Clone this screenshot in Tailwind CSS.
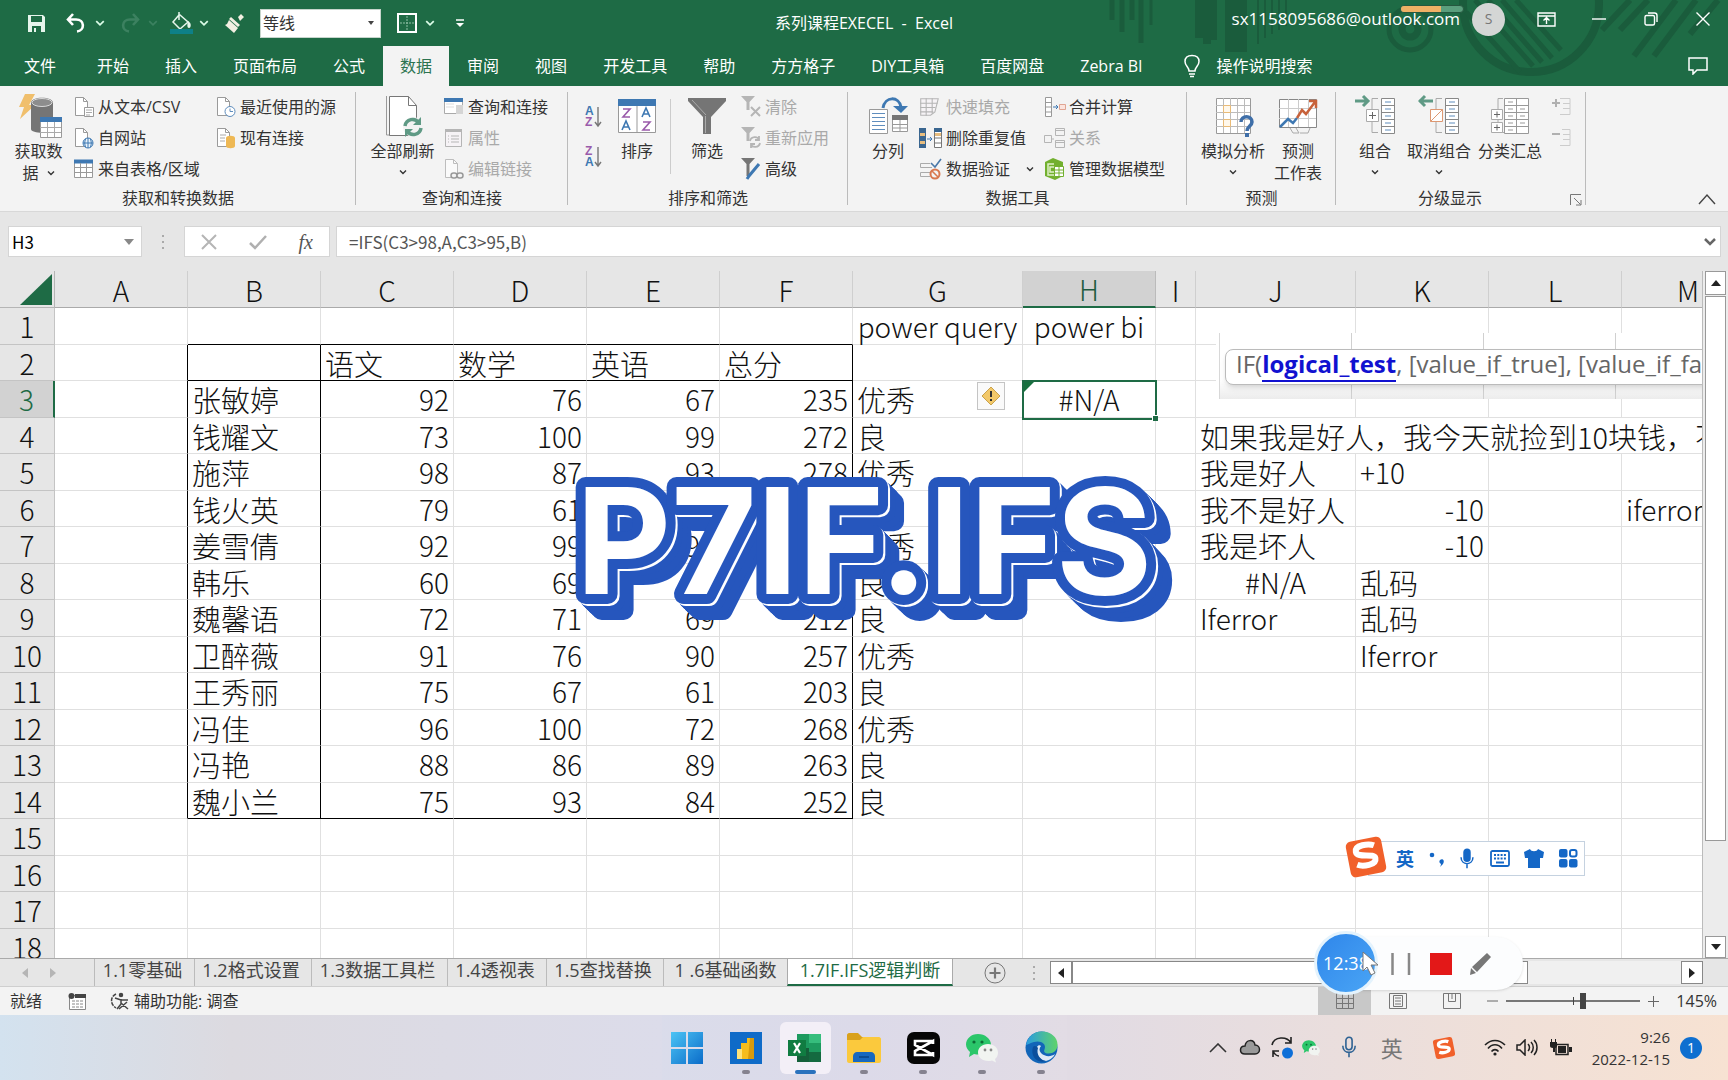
<!DOCTYPE html>
<html lang="zh-CN">
<head>
<meta charset="utf-8">
<title>系列课程EXECEL - Excel</title>
<script src="https://cdn.jsdelivr.net/npm/@tailwindcss/browser@4"></script>
</head>
<body class="relative flex h-screen flex-col overflow-hidden bg-[#e6e6e6] font-['Open_Sans','Noto_Sans_CJK_SC',sans-serif] text-base text-[#333]">

<svg class="hidden">
  <defs>
    <symbol id="chev" viewBox="0 0 8 8"><path d="M1 2.500 4 5.500 7 2.500" fill="none" stroke="currentColor" stroke-width="1.400"/></symbol>
    <symbol id="page" viewBox="0 0 22 22"><path d="M2.500 1.500h8l4 4v14h-12z" fill="#fff" stroke="#9a9a9a"/><path d="M10.500 1.500v4h4" fill="none" stroke="#9a9a9a"/></symbol>
    <symbol id="sogou" viewBox="0 0 44 44"><g transform="rotate(-11 22 22)"><rect x="4" y="4" width="36" height="36" rx="5" fill="#f1602a"/><path d="M32 12c-5-3-19-4-19 3 0 7 18 4 18 10 0 7-14 6-19 3" fill="none" stroke="#fff" stroke-width="6"/></g></symbol>
    <symbol id="wechat" viewBox="0 0 36 32"><path d="M14 2C7 2 2 7 2 12.500c0 3 2 6 4 7.500L5 25l5-3c10 2 17-2 17-9.500C27 7 21 2 14 2z" fill="#2bc66a"/><circle cx="10" cy="10" r="1.600" fill="#0c6b35"/><circle cx="18" cy="10" r="1.600" fill="#0c6b35"/><path d="M24 12c-6 0-10 4-10 8.500S18 29 24 29c1 0 3 0 4-.6l4 2-1-3.500c2-1.500 3-3.500 3-6.400C34 16 30 12 24 12z" fill="#f1f4f1"/><circle cx="21" cy="18" r="1.400" fill="#888"/><circle cx="27" cy="18" r="1.400" fill="#888"/></symbol>
    <symbol id="mic" viewBox="0 0 18 26"><rect x="5.500" y="1.500" width="7" height="14" rx="3.500"/><path d="M2 11c0 10 14 10 14 0M9 19v5" fill="none"/></symbol>
  </defs>
</svg>

<header class="relative shrink-0 bg-[#1e6b45] text-white">
  <svg class="absolute top-0 right-0 h-[86px] w-[628px]" viewBox="0 0 628 86" fill="none" stroke="#1a5c3c">
    <path d="M12 0v20M22 0v32M32 0v20M41 0v43" stroke-width="5"/>
    <path d="M51 0v25" stroke-width="3"/><path d="M99 0v38M107 0v44M113 0v40" stroke-width="8"/><path d="M136 0v52" stroke-width="22"/>
    <path d="M158 0v44M165 0v38M172 0v34M179 0v30M186 0v26" stroke-width="2"/>
    <circle cx="310" cy="29" r="21" stroke-width="5"/><circle cx="310" cy="29" r="8" stroke-width="7"/>
    <circle cx="431" cy="4" r="68" stroke-width="8"/>
    <path d="M375 0l58 66M388 0l54 62M402 0l50 58M416 0l45 50M366 12l54 60" stroke-width="5"/>
    <path d="M530 0l-28 30M548 0l-28 30M576 0l-42 56M596 0l-42 56M618 0l-28 34" stroke-width="6"/>
  </svg>
  <div class="relative grid h-[46px] grid-cols-[1fr_auto_1fr] items-center">
    <div class="flex items-center pl-[27px]">
      <button aria-label="保存" class="mr-5"><svg class="size-[19px]" viewBox="0 0 19 19"><path d="M1 1h15l2 2v15H1z" fill="#e6f5ec"/><path d="M4 2h11v6H4zM5 12h9v6H5z" fill="#1e6b45"/><path d="M7 14h2v4H7z" fill="#e6f5ec"/></svg></button>
      <button aria-label="撤消" class="mr-2.5"><svg class="h-5 w-[19px]" viewBox="0 0 19 20" fill="none" stroke="#fff" stroke-width="2.600"><path d="M7 1 2 6.500 7 12M2 6.500h8c9 0 9 11 1 12"/></svg></button>
      <svg class="mr-4 size-2.5 text-green-100"><use href="#chev"/></svg>
      <button aria-label="恢复" class="mr-2"><svg class="h-5 w-[19px]" viewBox="0 0 19 20" fill="none" stroke="#3c8160" stroke-width="2.600"><path d="M12 1l5 5.500L12 12M17 6.500H9c-9 0-9 11-1 12"/></svg></button>
      <svg class="mr-3 size-2.5 text-[#3c8160]"><use href="#chev"/></svg>
      <button aria-label="填充颜色" class="mr-1.5"><svg class="h-6 w-[23px]" viewBox="0 0 23 24"><path d="M9 4 3 11l7 7 8-7-8-7zM9 9V1" fill="none" stroke="#e6f5ec" stroke-width="1.500"/><path d="M18 10c4 2 3 7 1 7s-2-3-1-7z" fill="#e6f5ec"/><path d="M0 18h23v5H0z" fill="#0e8087"/></svg></button>
      <svg class="mr-4 size-2.5 text-green-100"><use href="#chev"/></svg>
      <button aria-label="格式刷" class="mr-4"><svg class="h-5 w-[19px]" viewBox="0 0 19 20" fill="#f3efe2"><path d="M13 4l3-3 3 3-4 4zM6 4l9 8-2 2-9-8zM4 7l9 8-4 5-9-8 2-1z"/></svg></button>
      <select aria-label="字体" class="h-[29px] w-[121px] appearance-none border border-[#c6d5cc] bg-white px-0.5 text-base leading-none text-[#333]"><option>等线</option></select>
      <svg class="-ml-4 mr-5 h-2 w-3" viewBox="0 0 12 8"><path d="M3 2h6L6 6z" fill="#444"/></svg>
      <button aria-label="边框" class="mr-2"><svg class="h-5 w-5" viewBox="0 0 20 20"><path d="M1 1h18v18H1z" fill="none" stroke="#fff" stroke-width="2"/><path d="M10 3v14M3 10h14" stroke="#8fc0a6" stroke-dasharray="2 1"/></svg></button>
      <svg class="mr-5 size-2.5 text-green-100"><use href="#chev"/></svg>
      <svg class="h-3 w-2.5" viewBox="0 0 10 12"><path d="M1 3h8" stroke="#fff" stroke-width="1.500"/><path d="M1 6h8L5 10z" fill="#fff"/></svg>
    </div>
    <h1 class="whitespace-pre">系列课程EXECEL  -  Excel</h1>
    <div class="relative flex items-center justify-end pr-[18px] pb-2">
      <span class="mr-3 text-[17px]">sx1158095686@outlook.com</span>
      <span class="mr-8 flex size-[33px] items-center justify-center rounded-full bg-[#d4d6d5] text-sm text-[#777]">S</span>
      <button aria-label="功能区显示选项" class="mr-9"><svg class="h-[15px] w-[19px]" viewBox="0 0 19 15" fill="none" stroke="#fff" stroke-width="1.400"><path d="M1 1h17v13H1zM1 4h17M9.500 12V6M6.500 8.500l3-3 3 3"/></svg></button>
      <button aria-label="最小化" class="mr-[38px]"><svg class="size-3.5" viewBox="0 0 14 14"><path d="M0 7h14" stroke="#fff" stroke-width="1.400"/></svg></button>
      <button aria-label="还原" class="mr-[38px]"><svg class="size-3.5" viewBox="0 0 14 14" fill="none" stroke="#fff" stroke-width="1.400"><rect x="1" y="3.500" width="9.500" height="9.500" rx="1.500"/><path d="M4 1h6.500c2 0 2.500 1 2.500 2.500V10"/></svg></button>
      <button aria-label="关闭"><svg class="size-3.5" viewBox="0 0 14 14"><path d="M.5.5l13 13M13.500.5l-13 13" stroke="#fff" stroke-width="1.400"/></svg></button>
      <span class="absolute top-0.5 right-[264px] h-2 w-16 overflow-hidden rounded-full border border-[#25583f] bg-[#5a9f7d]"><span class="block h-2 w-10 bg-[#efb165]"></span></span>
    </div>
  </div>
  <nav class="relative flex h-10 items-center whitespace-nowrap">
    <a href="#" class="pr-[23px] pl-6">文件</a>
    <a href="#" class="px-[18px]">开始</a>
    <a href="#" class="px-[18px]">插入</a>
    <a href="#" class="px-[18px]">页面布局</a>
    <a href="#" class="px-[18px]">公式</a>
    <a href="#" aria-current="page" class="flex h-full items-center bg-[#f3f3f3] px-[17px] text-[#2c7350]">数据</a>
    <a href="#" class="px-[18px]">审阅</a>
    <a href="#" class="px-[18px]">视图</a>
    <a href="#" class="px-[18px]">开发工具</a>
    <a href="#" class="px-[18px]">帮助</a>
    <a href="#" class="px-[18px]">方方格子</a>
    <a href="#" class="px-[18px]">DIY工具箱</a>
    <a href="#" class="px-[18px]">百度网盘</a>
    <a href="#" class="px-[18px]">Zebra BI</a>
    <a href="#" class="flex items-center gap-4 pl-[22px]"><svg class="h-6 w-[18px]" viewBox="0 0 18 24" fill="none" stroke="#fff" stroke-width="1.500"><path d="M6 17c0-4-4-5-4-9.500C2 3.500 5 1.500 9 1.500s7 2 7 6c0 4.500-4 5.500-4 9.500zM6 20h6M7 22.500h4"/></svg>操作说明搜索</a>
    <button aria-label="批注" class="mr-5 ml-auto"><svg class="h-[18px] w-5" viewBox="0 0 20 18" fill="none" stroke="#fff" stroke-width="1.500"><path d="M1 1h18v12H9l-4 4v-4H1z"/></svg></button>
  </nav>
</header>

<section aria-label="功能区" class="flex h-[126px] shrink-0 border-b border-[#d8d8d8] bg-[#f3f3f3] pt-[5px] leading-[22px] whitespace-nowrap">
  <!-- 获取和转换数据 -->
  <div class="relative w-[356px] shrink-0">
    <div class="flex h-[93px]">
      <button class="flex w-[73px] flex-col items-center pl-1"><svg class="h-[49px] w-[46px]" viewBox="0 0 46 49"><path d="M9 3h10l-6 11h6L4 28l4-12H3z" fill="#f0bf6c"/><path d="M15 12c0-7 22-7 22 0v26c0 5-22 5-22 0z" fill="#757575"/><ellipse cx="26" cy="11.500" rx="10" ry="4" fill="#8d8d8d" stroke="#d8d8d8"/><path d="M24.500 26.500h21v20h-21z" fill="#fff" stroke="#999"/><path d="M24 26h22v5H24z" fill="#3e78b2"/><path d="M24 36.500h21M24 41.500h21M31.500 31v15M38.500 31v15" stroke="#aaa"/></svg><span>获取数</span><span class="flex items-center gap-2">据<svg class="size-2"><use href="#chev"/></svg></span></button>
      <div class="w-[142px] shrink-0">
        <button class="flex h-[31px] items-center gap-[3px]"><svg class="size-[22px]" viewBox="0 0 22 22"><use href="#page"/><path d="M11.500 11.500h9v9h-9z" fill="#fff" stroke="#999"/><path d="M13 14h6M13 16.500h6M13 19h4" stroke="#aaa"/></svg>从文本/CSV</button>
        <button class="flex h-[31px] items-center gap-[3px]"><svg class="size-[22px]" viewBox="0 0 22 22"><use href="#page"/><g fill="#e9f3fb" stroke="#3e78b2"><circle cx="15" cy="16" r="5"/><path d="M10 16h10M15 11v10M12.500 12c-1 3-1 5 0 8M17.500 12c1 3 1 5 0 8" fill="none"/></g></svg>自网站</button>
        <button class="flex h-[31px] items-center gap-[3px]"><svg class="size-[22px]" viewBox="0 0 22 22"><path d="M1.500 2.500h18v17h-18z" fill="#fff" stroke="#999"/><path d="M1 1.500h19v4H1z" fill="#3e78b2"/><path d="M1 9.500h19M1 14.500h19M7.500 5v14M13.500 5v14" stroke="#999"/></svg>来自表格/区域</button>
      </div>
      <div>
        <button class="flex h-[31px] items-center gap-[3px]"><svg class="size-[22px]" viewBox="0 0 22 22"><use href="#page"/><circle cx="15" cy="15.500" r="5" fill="#fff" stroke="#5f8dbd"/><path d="M15 12.500v3h3" fill="none" stroke="#5f8dbd"/></svg>最近使用的源</button>
        <button class="flex h-[31px] items-center gap-[3px]"><svg class="size-[22px]" viewBox="0 0 22 22"><use href="#page"/><path d="M5 8h6M5 11h5M5 14h5" stroke="#aaa"/><path d="M11 11c0-3 9-3 9 0v8c0 3-9 3-9 0z" fill="#eeb854"/></svg>现有连接</button>
      </div>
    </div>
    <p class="text-center leading-7">获取和转换数据</p>
    <span class="absolute top-px right-0 h-[113px] w-px bg-[#bbb]"></span>
  </div>
  <!-- 查询和连接 -->
  <div class="relative w-[212px] shrink-0">
    <div class="flex h-[93px] pl-3.5">
      <button class="mr-2 flex w-[65px] flex-col items-center"><svg class="h-[49px] w-[40px]" viewBox="0 0 40 49"><path d="M3.500 5v39h20" fill="none" stroke="#999"/><path d="M6.500 5.500h19l8 9v30h-27z" fill="#fff" stroke="#777"/><path d="M25.500 5.500v9h8" fill="none" stroke="#777"/><circle cx="30" cy="36" r="10" fill="#f3f3f3"/><g fill="none" stroke="#5f9a85" stroke-width="3.500"><path d="M22 35c1-7 10-9 14-3M38 37c-1 7-10 9-14 3"/></g><path d="M38 26v8h-8zM22 46v-8h8z" fill="#5f9a85"/></svg><span>全部刷新</span><svg class="mt-1.5 size-2"><use href="#chev"/></svg></button>
      <div>
        <button class="flex h-[31px] items-center gap-[3px]"><svg class="size-[22px]" viewBox="0 0 22 22"><path d="M1.500 2.500h18v15h-18z" fill="#fff" stroke="#aaa"/><path d="M1 2h19v4H1z" fill="#3e78b2"/><path d="M13 9h7v9h-7z" fill="#d5d5d5"/><path d="M3 8h8M3 11h8" stroke="#ddd"/></svg>查询和连接</button>
        <button disabled class="flex h-[31px] items-center gap-[3px] text-[#a9a9a9]"><svg class="size-[22px]" viewBox="0 0 22 22"><path d="M2.500 2.500h16v17h-16z" fill="#f6f3f6" stroke="#b5b5b5"/><path d="M2 2h17v3H2z" fill="#b5b5b5"/><path d="M5 9h1M8 9h8M5 12h1M8 12h8M5 15h1M8 15h8" stroke="#b5b5b5"/></svg>属性</button>
        <button disabled class="flex h-[31px] items-center gap-[3px] text-[#a9a9a9]"><svg class="size-[22px]" viewBox="0 0 22 22"><g class="opacity-60"><use href="#page"/></g><g fill="#f3f3f3" stroke="#999" stroke-width="1.500"><rect x="8" y="15" width="6" height="5" rx="2.500"/><rect x="14" y="15" width="6" height="5" rx="2.500"/></g></svg>编辑链接</button>
      </div>
    </div>
    <p class="text-center leading-7">查询和连接</p>
    <span class="absolute top-px right-0 h-[113px] w-px bg-[#bbb]"></span>
  </div>
  <!-- 排序和筛选 -->
  <div class="relative w-[280px] shrink-0">
    <div class="flex h-[93px] pl-[17px]">
      <div class="mr-2.5 flex w-5 flex-col gap-4 pt-3.5 font-['Liberation_Sans'] text-xs leading-[11px]">
        <button aria-label="升序" class="flex items-center text-left font-bold text-[#3e78b2]"><span class="block">A<br><span class="text-[#9a5bab]">Z</span></span><svg class="h-6 w-2" viewBox="0 0 8 24"><path d="M4 2v19M1 17l3 4 3-4" fill="none" stroke="#777" stroke-width="1.400"/></svg></button>
        <button aria-label="降序" class="flex items-center text-left font-bold text-[#9a5bab]"><span class="block">Z<br><span class="text-[#3e78b2]">A</span></span><svg class="h-6 w-2" viewBox="0 0 8 24"><path d="M4 2v19M1 17l3 4 3-4" fill="none" stroke="#777" stroke-width="1.400"/></svg></button>
      </div>
      <button class="flex w-11 flex-col items-center"><svg class="h-[49px] w-[38px]" viewBox="0 0 38 49"><path d="M.5 8.500h37v33H.5z" fill="#fff" stroke="#999"/><path d="M0 8h38v7H0z" fill="#3e78b2"/><path d="M19 15v26" stroke="#999"/><g fill="none" stroke-width="1.600"><path d="M5 18h7l-7 8h7M25 31h7l-7 8h7" stroke="#9a5bab"/><path d="M4 39l4-9 4 9M5.500 36h5M24 26l4-9 4 9M25.500 23h5" stroke="#3e78b2"/></g></svg><span>排序</span></button>
      <span class="mx-[11px] mt-2 h-[75px] w-px bg-[#ccc]"></span>
      <button class="mr-2 flex w-[50px] flex-col items-center"><svg class="h-[49px] w-[38px]" viewBox="0 0 38 49"><path d="M0 7h38v3L23 26v17h-8V26L0 10z" fill="#757575"/><path d="M17.500 25v17M4 9l14 15" stroke="#aaa"/></svg><span>筛选</span></button>
      <div>
        <button disabled class="flex h-[31px] items-center gap-[3px] text-[#a9a9a9]"><svg class="size-[22px]" viewBox="0 0 22 22"><path d="M1 0h14L9.500 6v8h-3V6z" fill="#b5b5b5"/><path d="M11 11l9 9M20 11l-9 9" stroke="#b5b5b5" stroke-width="2"/></svg>清除</button>
        <button disabled class="flex h-[31px] items-center gap-[3px] text-[#a9a9a9]"><svg class="size-[22px]" viewBox="0 0 22 22"><path d="M1 0h14L9.500 6v8h-3V6z" fill="#b5b5b5"/><path d="M10 14c1-5 8-5 9-1M20 16c-1 5-8 5-9 1M19 9v4h-4M11 21v-4h4" fill="none" stroke="#b5b5b5" stroke-width="1.800"/></svg>重新应用</button>
        <button class="flex h-[31px] items-center gap-[3px]"><svg class="size-[22px]" viewBox="0 0 22 22"><path d="M1 0h14L9.500 6v12h-3V6z" fill="#757575"/><path d="M19 6 9 18l-2 3" stroke="#3e78b2" stroke-width="3"/></svg>高级</button>
      </div>
    </div>
    <p class="text-center leading-7">排序和筛选</p>
    <span class="absolute top-px right-0 h-[113px] w-px bg-[#bbb]"></span>
  </div>
  <!-- 数据工具 -->
  <div class="relative w-[339px] shrink-0">
    <div class="flex h-[93px] pl-[18px]">
      <button class="mr-2 flex w-11 flex-col items-center"><svg class="h-[49px] w-[40px]" viewBox="0 0 40 49"><path d="M1.500 18.500h18v24h-18z" fill="#fff" stroke="#999"/><path d="M4 22.500h13M4 26.500h13M4 30.500h13M4 34.500h13M4 38.500h13" stroke="#5f8dbd"/><path d="M15 17c2-12 16-12 18-1" fill="none" stroke="#3e78b2" stroke-width="3"/><path d="M25 15h15l-7 7z" fill="#3e78b2"/><path d="M24.500 25.500h15v15h-15z" fill="#fff" stroke="#999"/><path d="M24 24h16v5H24z" fill="#757575"/><path d="M24 33.500h15M24 37h15M32 29v11" stroke="#999"/></svg><span>分列</span></button>
      <div class="w-[126px] shrink-0">
        <button disabled class="flex h-[31px] items-center gap-1 text-[#a9a9a9]"><svg class="size-6" viewBox="0 0 22 22"><path d="M2.500 3.500h16l-3 12-4 3h-9z" fill="#f6f3f6" stroke="#b5b5b5"/><path d="M2 7.500h16M2 11.500h14M2 15.500h12M7.500 3v16M13 3v14" stroke="#b5b5b5"/></svg>快速填充</button>
        <button class="flex h-[31px] items-center gap-1"><svg class="size-6" viewBox="0 0 24 24"><path d="M1 2h7v20H1z" fill="#3a6690"/><path d="M2 7h5v3H2zM2 15h5v3H2z" fill="#e8bd7e"/><path d="M16.500 2.500h7v19h-7z" fill="#fff" stroke="#777"/><path d="M16 2h8v4h-8z" fill="#3a6690"/><path d="M17 7h6v3h-6z" fill="#e8bd7e"/><path d="M16 12h8M16 17h8" stroke="#777"/><path d="M9 13h5M12 11l2 2-2 2" fill="none" stroke="#3e78b2"/></svg>删除重复值</button>
        <button class="flex h-[31px] items-center gap-1"><svg class="size-6" viewBox="0 0 24 24"><path d="M12 6.500H2.500v4H14M12 15.500H2.500v4H12" fill="none" stroke="#aaa"/><path d="M13 6l4 4 6-8" fill="none" stroke="#4a78a8" stroke-width="1.600"/><circle cx="17" cy="17" r="4.500" fill="none" stroke="#d9784f" stroke-width="2"/><path d="M14 14l6 6" stroke="#d9784f" stroke-width="1.600"/></svg>数据验证<svg class="ml-3 size-2"><use href="#chev"/></svg></button>
      </div>
      <div class="-ml-0.5">
        <button class="flex h-[31px] items-center gap-[3px]"><svg class="size-6" viewBox="0 0 24 24"><path d="M3.500 2.500h6v19h-6zM3 7.500h6M3 12h6M3 17h6" fill="#fff" stroke="#999"/><path d="M11 12h5M14 10l2 2-2 2" fill="none" stroke="#3e78b2"/><path d="M17.500 9.500h6v5h-6z" fill="#fbe4de" stroke="#e0a593"/></svg>合并计算</button>
        <button disabled class="flex h-[31px] items-center gap-[3px] text-[#a9a9a9]"><svg class="size-6" viewBox="0 0 24 24" fill="none" stroke="#b5b5b5"><path d="M2.500 9.500h7v7h-7zM13.500 2.500h9v7h-9zM13.500 14.500h9v7h-9zM10 13h2M13 4.500h9M13 16.500h9"/></svg>关系</button>
        <button class="flex h-[31px] items-center gap-[3px]"><svg class="size-6" viewBox="0 0 24 24"><path d="M3 5l8-4 10 4v14l-8 4-10-4z" fill="#72b02e"/><path d="M12 7H6v11h6M12 10H8v5h4" fill="none" stroke="#dff0c8" stroke-width="1.500"/><path d="M12.500 9.500h9v10h-9zM12 13h9M12 16h9M17 9v10" fill="#fff" stroke="#72b02e"/></svg>管理数据模型</button>
      </div>
    </div>
    <p class="text-center leading-7">数据工具</p>
    <span class="absolute top-px right-0 h-[113px] w-px bg-[#bbb]"></span>
  </div>
  <!-- 预测 -->
  <div class="relative w-[149px] shrink-0">
    <div class="flex h-[93px] pl-3">
      <button class="flex w-[68px] flex-col items-center"><svg class="h-[49px] w-[42px]" viewBox="0 0 42 49"><path d="M4.500 7.500h34v35h-34z" fill="#fff" stroke="#999"/><path d="M4 14.500h34M4 21.500h34M4 28.500h34M4 35.500h34M11.500 7v35M18.500 7v35M25.500 7v35M32.500 7v35" stroke="#bbb"/><path d="M11.500 14.500h7v7h-7zM11.500 28.500h7v7h-7z" fill="#fff8ec" stroke="#e9bb77"/><path d="M29 31c0-7 11-7 11 0 0 4-5 4-5 9" fill="none" stroke="#3e6ea8" stroke-width="3.500"/><path d="M33 42h4v4h-4z" fill="#3e6ea8"/></svg><span>模拟分析</span><svg class="mt-1.5 size-2"><use href="#chev"/></svg></button>
      <button class="flex w-[62px] flex-col items-center"><svg class="h-[49px] w-[40px]" viewBox="0 0 40 49"><path d="M1.500 8.500h37v28h-37z" fill="#fff" stroke="#888"/><path d="M1 17.500h37M1 27.500h37M10.500 8v28M20.500 8v28M30.500 8v28" stroke="#ccc"/><path d="M2 36l8-8 5 4 4-5" fill="none" stroke="#3e78b2" stroke-width="2.500"/><path d="M19 27l5-8 4 4 9-12M31 10h7v7" fill="none" stroke="#c8623b" stroke-width="2.500"/><path d="M12 37l3 5h6l-3-5M22 42h8l2-5" fill="none" stroke="#aaa"/></svg><span>预测</span><span>工作表</span></button>
    </div>
    <p class="text-center leading-7">预测</p>
    <span class="absolute top-px right-0 h-[113px] w-px bg-[#bbb]"></span>
  </div>
  <!-- 分级显示 -->
  <div class="relative w-[250px] shrink-0">
    <div class="flex h-[93px] pl-[10px]">
      <button class="flex w-[58px] flex-col items-center"><svg class="h-[49px] w-[42px]" viewBox="0 0 42 49"><path d="M1 10h13M9 5l5 5-5 5" fill="none" stroke="#5f9a85" stroke-width="3"/><path d="M24 7.500h-6v34h6" fill="none" stroke="#aaa"/><path d="M12.500 18.500h12v12h-12z" fill="#fff" stroke="#aaa"/><path d="M15 24.500h7M18.500 21v7" stroke="#666"/><path d="M27.500 7.500h13v35h-13zM27 14.500h13M27 21.500h13M27 28.500h13M27 35.500h13" fill="#fff" stroke="#888"/><path d="M31 11h6M31 18h6M31 25h6M31 32h6M31 39h6" stroke="#5f8dbd"/></svg><span>组合</span><svg class="mt-1.5 size-2"><use href="#chev"/></svg></button>
      <button class="flex w-[70px] flex-col items-center"><svg class="h-[49px] w-[42px]" viewBox="0 0 42 49"><path d="M1 10h14M7 5l-5 5 5 5" fill="none" stroke="#5f9a85" stroke-width="3"/><path d="M24 7.500h-6v34h6" fill="none" stroke="#aaa"/><path d="M12.500 18.500h12v12h-12zM12.500 30.500l12-12" fill="#fff" stroke="#dd9872"/><path d="M27.500 7.500h13v35h-13zM27 14.500h13M27 21.500h13M27 28.500h13M27 35.500h13" fill="#fff" stroke="#888"/><path d="M31 11h6M31 18h6M31 25h6M31 32h6M31 39h6" stroke="#5f8dbd"/></svg><span>取消组合</span><svg class="mt-1.5 size-2"><use href="#chev"/></svg></button>
      <button class="flex w-[72px] flex-col items-center"><svg class="h-[49px] w-[40px]" viewBox="0 0 40 49"><path d="M13 7.500H8v34h6" fill="none" stroke="#aaa"/><path d="M1.500 18.500h11v10h-11zM1.500 31.500h11v10h-11z" fill="#fff" stroke="#aaa"/><path d="M4 23.500h6M7 20.500v6M4 36.500h6M7 33.500v6" stroke="#666"/><path d="M14.500 7.500h24v35h-24zM14 14.500h24M14 21.500h24M14 28.500h24M14 35.500h24M26.500 7v35" fill="#fff" stroke="#999"/><path d="M18 11h5M18 18h5M30 18h5M18 25h5M30 25h5M18 32h5M30 32h5M18 39h5" stroke="#999"/></svg><span>分类汇总</span></button>
      <div class="pl-1.5">
        <button disabled aria-label="显示明细数据" class="flex h-[31px] items-center"><svg class="size-[20px]" viewBox="0 0 20 20" fill="none" stroke="#b0b0b0"><path d="M0 6h8M4 2v8" stroke-width="2"/><path d="M8 1.500h10v5H11M18 6.500v5h-7M18 11.500v6H8" stroke="#ccc"/></svg></button>
        <button disabled aria-label="隐藏明细数据" class="flex h-[31px] items-center"><svg class="size-[20px]" viewBox="0 0 20 20" fill="none" stroke="#b0b0b0"><path d="M0 6h8" stroke-width="2"/><path d="M10 1.500h8v5h-7M18 6.500v5h-7M18 11.500v6H8" stroke="#ccc"/></svg></button>
      </div>
    </div>
    <p class="pr-[22px] text-center leading-7">分级显示</p>
    <button aria-label="分级显示设置" class="absolute right-1 bottom-[5px]"><svg class="size-3" viewBox="0 0 12 12" fill="none" stroke="#777"><path d="M.5 11V.5H11M4 4l6.500 6.500M11 6v5H6"/></svg></button>
    <span class="absolute top-px right-0 h-[113px] w-px bg-[#bbb]"></span>
  </div>
  <button aria-label="折叠功能区" class="mr-3 mb-1.5 ml-auto self-end"><svg class="h-3 w-[18px]" viewBox="0 0 18 12"><path d="M1 11l8-9 8 9" fill="none" stroke="#444" stroke-width="1.400"/></svg></button>
</section>

<div class="flex h-[59px] shrink-0 items-center pr-[7px] pl-2">
  <div class="flex h-[31px] w-[134px] items-center border border-[#d5d5d5] bg-white pr-1.5">
    <input aria-label="名称框" value="H3" class="w-0 flex-1 px-[3px] font-['Noto_Sans_CJK_SC'] text-[17px] text-black outline-none">
    <svg class="h-2 w-3" viewBox="0 0 12 8"><path d="M1 1h10L6 7z" fill="#888"/></svg>
  </div>
  <svg class="mx-[19px] h-4 w-1" viewBox="0 0 4 16" fill="#aaa"><path d="M1 1h2v2H1zM1 7h2v2H1zM1 13h2v2H1z"/></svg>
  <div class="mr-1.5 flex h-[31px] w-[146px] items-center justify-between border border-[#d5d5d5] bg-white px-4">
    <button aria-label="取消"><svg class="size-4" viewBox="0 0 16 16"><path d="M1 1l14 14M15 1L1 15" stroke="#b5b5b5" stroke-width="2"/></svg></button>
    <button aria-label="输入"><svg class="h-4 w-[18px]" viewBox="0 0 18 16"><path d="M1 9l5 5L17 2" fill="none" stroke="#b0b0b0" stroke-width="2.500"/></svg></button>
    <button class="font-['Liberation_Serif'] text-xl leading-none text-[#555] italic">fx</button>
  </div>
  <div class="flex h-[31px] flex-1 items-center border border-[#d5d5d5] bg-white pr-1 pl-3">
    <input aria-label="编辑栏" value="=IFS(C3&gt;98,A,C3&gt;95,B)" class="w-0 flex-1 font-['Noto_Sans_CJK_SC'] text-[17px] text-[#555] outline-none">
    <svg class="h-2 w-3" viewBox="0 0 12 8"><path d="M1 1l5 5 5-5" fill="none" stroke="#666" stroke-width="2.500"/></svg>
  </div>
</div>

<main class="flex min-h-0 flex-1">
  <div class="relative min-w-0 flex-1 overflow-hidden bg-white">
    <table class="w-[1755px] table-fixed border-separate border-spacing-0 font-['Noto_Sans_CJK_SC',sans-serif] text-[28px] leading-[34px] font-light whitespace-nowrap text-[#111]">
      <colgroup id="cols"></colgroup>
      <thead><tr id="head"></tr></thead>
      <tbody id="rows"></tbody>
    </table>

    <!-- 活动单元格与错误提示 -->
    <div class="pointer-events-none absolute top-[109px] left-[1022px] h-[40px] w-[135px] border-2 border-[#1e6b45]">
      <svg class="size-2.5" viewBox="0 0 10 10"><path d="M0 0h10L0 10z" fill="#17703f"/></svg>
      <span class="absolute -right-[3px] -bottom-[3px] size-1.5 border-t border-l border-white bg-[#1e6b45]"></span>
    </div>
    <button aria-label="错误提示" class="absolute top-[111px] left-[977px] flex size-7 items-center justify-center border border-[#c4c4c4] bg-[#fafafa]"><svg class="size-5" viewBox="0 0 20 20"><path d="M10 1l9 9-9 9-9-9z" fill="#f2c869" stroke="#c9a24c"/><path d="M10 5v6M10 13v2" stroke="#333" stroke-width="2"/></svg></button>

    <!-- 函数语法提示 -->
    <div class="absolute top-[62px] left-[1216px] h-[66px] w-[520px] bg-white pl-[3px]">
      <div class="flex h-full bg-linear-to-b from-white from-70% to-[#ececec]">
        <span class="h-full w-[132px] border-l border-[#d8d8d8]"></span><span class="h-full w-[132px] border-l border-[#d0d0d0]"></span><span class="h-full w-[132px] border-l border-[#d0d0d0]"></span><span class="h-full w-[100px] border-l border-[#d0d0d0]"></span>
      </div>
      <div class="absolute top-[16px] left-[9px] flex h-9 w-[640px] items-start rounded-lg border border-[#bbb] bg-white pl-2.5 text-2xl leading-7 whitespace-pre text-[#666] shadow-md"><span>IF(<b class="border-b-2 border-[#1111d0] text-[#1111d0]">logical_test</b>, [value_if_true], [value_if_false])</span></div>
    </div>
  </div>

  <!-- 垂直滚动条 -->
  <div class="flex w-[26px] shrink-0 flex-col items-center border-l border-[#bbb] bg-[#ececec]">
    <button aria-label="向上滚动" class="flex h-6 w-[21px] items-center justify-center border border-[#999] bg-white"><svg class="h-1.5 w-2.5" viewBox="0 0 10 6"><path d="M0 6l5-6 5 6z" fill="#222"/></svg></button>
    <div class="mt-px h-[545px] w-[21px] border border-[#999] bg-white"></div>
    <button aria-label="向下滚动" class="mt-auto flex h-[22px] w-[21px] items-center justify-center border border-[#999] bg-white"><svg class="h-1.5 w-2.5" viewBox="0 0 10 6"><path d="M0 0h10L5 6z" fill="#222"/></svg></button>
  </div>
</main>

<div class="flex h-[29px] shrink-0 border-y border-t-[#aaa] border-b-[#cfcfcf] bg-[#e6e6e6] text-lg leading-[22px] whitespace-nowrap text-[#444]">
  <div class="flex w-[94px] items-center gap-[22px] pl-[22px]"><svg class="h-2.5 w-1.5" viewBox="0 0 6 10"><path d="M6 0v10L0 5z" fill="#b5b5b5"/></svg><svg class="h-2.5 w-1.5" viewBox="0 0 6 10"><path d="M0 0v10l6-5z" fill="#b5b5b5"/></svg></div>
  <a href="#" class="w-[100px] border-l border-[#bbb] pr-1 text-center">1.1零基础</a>
  <a href="#" class="w-[117px] border-l border-[#bbb] pr-1 text-center">1.2格式设置</a>
  <a href="#" class="w-[136px] border-l border-[#bbb] pr-1 text-center">1.3数据工具栏</a>
  <a href="#" class="w-[99px] border-l border-[#bbb] pr-1 text-center">1.4透视表</a>
  <a href="#" class="w-[117px] border-l border-[#bbb] pr-1 text-center">1.5查找替换</a>
  <a href="#" class="w-[124px] border-l border-[#bbb] text-center">1 .6基础函数</a>
  <a href="#" aria-current="page" class="w-[166px] border-x border-b-2 border-x-[#aaa] border-b-[#1e6b45] bg-white text-center text-[#1e6b45]">1.7IF.IFS逻辑判断</a>
  <button aria-label="新工作表" class="ml-[31px]"><svg class="size-[22px]" viewBox="0 0 22 22" fill="none" stroke="#777"><circle cx="11" cy="11" r="10"/><path d="M5.500 11h11M11 5.500v11" stroke-width="2.200"/></svg></button>
  <svg class="mt-1.5 mr-3.5 ml-[26px] h-4 w-1" viewBox="0 0 4 16" fill="#aaa"><path d="M1 1h2v2H1zM1 7h2v2H1zM1 13h2v2H1z"/></svg>
  <div class="mt-0.5 mr-[25px] flex h-[23px] flex-1 bg-[#f0f0f0]">
    <button aria-label="向左滚动" class="flex w-[22px] items-center justify-center border border-[#888] bg-white"><svg class="h-2.5 w-1.5" viewBox="0 0 6 10"><path d="M6 0v10L0 5z" fill="#222"/></svg></button>
    <div class="w-[456px] border border-[#888] bg-white"></div>
    <button aria-label="向右滚动" class="ml-auto flex w-[22px] items-center justify-center border border-[#888] bg-white"><svg class="h-2.5 w-1.5" viewBox="0 0 6 10"><path d="M0 0v10l6-5z" fill="#222"/></svg></button>
  </div>
</div>

<footer class="flex h-7 shrink-0 items-center bg-[#f3f3f3] pr-[11px] pl-2.5 whitespace-nowrap">
  <span class="mr-[26px]">就绪</span>
  <svg class="mr-6 h-[17px] w-[18px]" viewBox="0 0 18 17"><path d="M1.500 2.500h16v14h-16z" fill="#fff" stroke="#888"/><path d="M7 1h11v4H7z" fill="#444"/><circle cx="3.500" cy="3" r="3" fill="#444"/><path d="M4 8h3M8 8h3M12 8h3M4 11h3M8 11h3M12 11h3M4 14h3M8 14h3M12 14h3" stroke="#888"/></svg>
  <svg class="mr-1 h-[18px] w-5" viewBox="0 0 20 18" fill="none" stroke="#444" stroke-width="1.500"><path d="M6 2c-6 3-6 10 0 14" stroke-dasharray="4 1"/><circle cx="11" cy="3" r="1.500" fill="#444"/><path d="M5 6l6 2h7M11 7v5l-4 5M11 11l7 6M17 10l-8 7"/></svg>
  <button>辅助功能: 调查</button>
  <div class="ml-auto flex h-full items-center">
    <button aria-label="普通" class="flex h-full w-[53px] items-center justify-center bg-[#c8c8c8]"><svg class="h-4 w-[18px]" viewBox="0 0 18 16" fill="none" stroke="#777"><path d="M.5.500h17v15H.5zM0 5.500h18M0 10.500h18M6.500 0v16M12.500 0v16"/></svg></button>
    <button aria-label="页面布局" class="flex w-[54px] justify-center"><svg class="h-4 w-[18px]" viewBox="0 0 18 16" fill="none" stroke="#777"><path d="M.5.500h17v15H.5zM4.500 2.500h9v11h-9zM6 5h6M6 8h6M6 11h6"/></svg></button>
    <button aria-label="分页预览" class="flex w-[54px] justify-center"><svg class="h-4 w-[18px]" viewBox="0 0 18 16" fill="none" stroke="#777"><path d="M.5.500h17v15H.5zM5.500 0v8.500h7V0M9 1v5"/></svg></button>
    <button aria-label="缩小" class="ml-2 w-[11px]"><svg class="h-3 w-[11px]" viewBox="0 0 11 12"><path d="M0 6h11" stroke="#666"/></svg></button>
    <div class="relative mx-2 flex h-4 w-[134px] items-center">
      <span class="h-0.5 w-full bg-[#777]"></span><span class="absolute left-[67px] h-2 w-px bg-[#444]"></span>
      <input type="range" aria-label="显示比例" min="10" max="400" value="145" class="absolute inset-0 w-full opacity-0">
      <span class="pointer-events-none absolute left-[74px] h-4 w-1.5 bg-[#444]"></span>
    </div>
    <button aria-label="放大" class="mr-[17px] w-[11px]"><svg class="size-[11px]" viewBox="0 0 11 11"><path d="M0 5.500h11M5.500 0v11" stroke="#666"/></svg></button>
    <span>145%</span>
  </div>
</footer>

<div class="grid h-[65px] shrink-0 grid-cols-[1fr_auto_1fr] items-center bg-linear-to-r from-[#d3e2ef] via-[#dcdae9] via-50% to-[#f6e2d6]">
  <div class="h-full bg-linear-to-r from-[#d3e2ef] via-[#dcdae0] via-35% to-[#dcdcea]"></div>
  <nav aria-label="任务栏" class="flex h-full items-center gap-2 [&>button]:relative [&>button]:flex [&>button]:h-[52px] [&>button]:w-[51px] [&>button]:items-center [&>button]:justify-center [&>button]:rounded-md">
    <button aria-label="开始"><svg class="size-8" viewBox="0 0 32 32"><defs><linearGradient id="wg" x2="1" y2="1"><stop stop-color="#4cc4f5"/><stop offset="1" stop-color="#0b6cc9"/></linearGradient></defs><path d="M0 0h15v15H0zM17 0h15v15H17zM0 17h15v15H0zM17 17h15v15H17z" fill="url(#wg)"/></svg></button>
    <button aria-label="Power BI"><svg class="size-8" viewBox="0 0 32 32"><path d="M0 0h32v32H0z" fill="#0f6bc8"/><path d="M17 6h7v21H7V17h4v-6h6z" fill="#f5bd1d"/><path d="M7 17h5v10H7z" fill="#fde27a"/><path d="M20 6h4v21h-6z" fill="#d79a0c"/></svg><span class="absolute bottom-0 h-1 w-2 rounded-full bg-[#85828f]"></span></button>
    <button aria-label="Excel" class="bg-[#f3eff7]"><svg class="h-8 w-[34px]" viewBox="0 0 34 32"><path d="M9 2h24v28H9z" fill="#1d9a5f"/><path d="M21 2h12v9H21z" fill="#36bd7d"/><path d="M9 16h12v14H9z" fill="#14603a"/><path d="M21 20h12v10H21z" fill="#146a40"/><path d="M0 8h18v16H0z" fill="#107c41"/><path d="M6 11l6 10M12 11L6 21" stroke="#fff" stroke-width="2.200"/></svg><span class="absolute bottom-0 h-1 w-[21px] rounded-full bg-[#2a72bd]"></span></button>
    <button aria-label="文件资源管理器"><svg class="h-[30px] w-[34px]" viewBox="0 0 34 30"><path d="M0 2c0-1 1-2 2-2h9l4 4h17v8H0z" fill="#d9a11c"/><path d="M0 7h13l3-3h16c1 0 2 1 2 2v22c0 1-1 2-2 2H2c-1 0-2-1-2-2z" fill="#fbc93d"/><path d="M6 29v-6c0-2 2-4 4-4h14c2 0 4 2 4 4v6z" fill="#1868bf"/><path d="M12 24h10" stroke="#0d4c93" stroke-width="2"/></svg><span class="absolute bottom-0 h-1 w-2 rounded-full bg-[#85828f]"></span></button>
    <button aria-label="剪映"><svg class="h-8 w-[33px]" viewBox="0 0 33 32"><rect width="33" height="32" rx="7" fill="#060606"/><path d="M26 12V9H8v4l18 10v-3M26 20v3H8v-4L26 9v3" fill="none" stroke="#fff" stroke-width="2.600"/></svg><span class="absolute bottom-0 h-1 w-2 rounded-full bg-[#85828f]"></span></button>
    <button aria-label="微信"><svg class="h-8 w-9"><use href="#wechat"/></svg><span class="absolute bottom-0 h-1 w-2 rounded-full bg-[#85828f]"></span></button>
    <button aria-label="Edge"><svg class="size-[33px]" viewBox="0 0 33 33"><defs><linearGradient id="eg" x2="1"><stop stop-color="#2a9be0"/><stop offset="1" stop-color="#5fd36b"/></linearGradient></defs><circle cx="16.500" cy="16.500" r="16" fill="#1265b8"/><path d="M1 14C3 5 9 .5 17 .5c9 0 15.500 6 15.500 13 0 6-4 9-9 9-4 0-5-2-4-4 2-5-2-8-7-8-5 0-9 3-11.500 3.500z" fill="url(#eg)"/><path d="M12 16c-2 7 2 13 9 14 4-1 8-4 9-7-4 3-10 3-14-1-2-2-2-5 0-7-1-1-3-1-4 1z" fill="#dfe9f5"/><path d="M8 16c-3 9 4 17 13 14-6-1-10-7-8-13-1-2-4-3-5-1z" fill="#0c4f9c"/></svg><span class="absolute bottom-0 h-1 w-2 rounded-full bg-[#85828f]"></span></button>
  </nav>
  <div class="flex h-full items-center justify-end bg-linear-to-r from-[#e1dbe4] to-[#f7e2d2] pr-[26px] text-[#333]">
    <svg class="mr-3 h-2.5 w-[18px]" viewBox="0 0 18 10"><path d="M1 9l8-8 8 8" fill="none" stroke="#333" stroke-width="1.600"/></svg>
    <svg class="mr-2.5 h-[17px] w-[22px]" viewBox="0 0 22 17"><path d="M6 15c-6 0-6-8 0-8C7 0 15 0 16 6c6 0 6 9 0 9z" fill="#9a9a9a" stroke="#222" stroke-width="1.500"/></svg>
    <svg class="mr-2 h-[23px] w-[22px]" viewBox="0 0 22 23" fill="none" stroke="#222" stroke-width="1.600"><path d="M1 9C3 0 16 0 20 7M20 1v6h-6M8 20c-3 0-5-3-6-5M2 21v-6h6"/><circle cx="16.500" cy="17" r="5.500" fill="#0e6fd8" stroke="none"/></svg>
    <svg class="mr-5 h-[18px] w-5"><use href="#wechat"/></svg>
    <svg class="mr-6 h-[23px] w-4" fill="none" stroke="#2e6293" stroke-width="1.800"><use href="#mic"/></svg>
    <span class="mr-[29px] text-[22px] leading-none text-[#777]">英</span>
    <svg class="mr-7 size-6"><use href="#sogou"/></svg>
    <svg class="mr-2.5 h-[17px] w-[22px]" viewBox="0 0 22 17" fill="none" stroke="#222" stroke-width="1.600"><path d="M1 6c6-6 14-6 20 0M4 9.500c4-5 10-5 14 0M7.500 12.500c2-2.500 5-2.500 7 0"/><circle cx="11" cy="15" r="1.600" fill="#222" stroke="none"/></svg>
    <svg class="mr-3 h-[17px] w-[22px]" viewBox="0 0 22 17" fill="none" stroke="#222" stroke-width="1.500"><path d="M1 6v5h3l5 5V1L4 6zM12 5c2 2 2 5 0 7M15 3c3 3 3 8 0 11M18 1c4 4 4 11 0 15"/></svg>
    <svg class="mr-5 h-[17px] w-[22px]" viewBox="0 0 22 17"><path d="M6 5.500h12v10H6z" fill="none" stroke="#222" stroke-width="1.500"/><path d="M8 7h8v7H8zM19 8h3v5h-3zM0 3h7v4c0 1-1 2-2 2v4H3V9C1 9 0 8 0 7zM1 0h1v3H1zM5 0h1v3H5z" fill="#222"/></svg>
    <p class="mr-[10px] text-right text-[15px] leading-[22px]"><time>9:26<br>2022-12-15</time></p>
    <span class="flex size-[22px] items-center justify-center rounded-full bg-[#0e6fd0] text-sm text-white">1</span>
  </div>
</div>

<!-- 搜狗输入法状态栏 -->
<div class="absolute top-[841px] left-[1368px] flex h-[35px] w-[217px] items-center justify-between border border-[#c5d2e0] bg-white pr-1.5 pl-[27px] text-[#1467c6]">
  <svg class="absolute -top-[7px] -left-[25px] size-11"><use href="#sogou"/></svg>
  <b class="text-lg leading-none">英</b>
  <svg class="h-4 w-4" viewBox="0 0 16 16" fill="#1467c6"><circle cx="3" cy="4" r="2.300"/><path d="M11 9c3-2 5 1 3 4l-3 3c1-2 1-3 1-3-2-1-2-3-1-4z"/></svg>
  <svg class="h-[22px] w-4" fill="#1467c6" stroke="#1467c6" stroke-width="1.800"><use href="#mic"/></svg>
  <svg class="h-[17px] w-5" viewBox="0 0 20 17"><rect x="1" y="1" width="18" height="15" rx="1.500" fill="none" stroke="#1467c6" stroke-width="1.800"/><path d="M4 5h12M4 8.500h12" stroke="#1467c6" stroke-width="2" stroke-dasharray="2 1.300"/><path d="M6 12.500h8" stroke="#1467c6" stroke-width="2"/></svg>
  <svg class="h-[19px] w-5" viewBox="0 0 20 19"><path d="M6 0c1 3 7 3 8 0l6 3-1 6h-3v10H4V9H1L0 3z" fill="#1467c6"/></svg>
  <svg class="size-[19px]" viewBox="0 0 19 19" fill="#1467c6"><rect width="8.500" height="8.500" rx="2"/><rect y="10" width="8.500" height="8.500" rx="2"/><rect x="10" y="10" width="8.500" height="8.500" rx="2"/><rect x="11" y="1" width="6.500" height="6.500" rx="2" fill="none" stroke="#1467c6" stroke-width="2"/></svg>
</div>

<!-- 录屏控制条 -->
<div class="absolute top-[937px] left-[1330px] flex h-[53px] w-[193px] items-center rounded-full bg-[#fcfdfe] pl-[61px] shadow-sm">
  <span class="absolute -top-1.5 -left-[16px] flex size-16 items-center justify-center rounded-full border-[3px] border-[#e4f3fd] bg-linear-to-br from-[#2f86ea] to-[#4aa5f5] text-lg text-white">12:38</span>
  <button aria-label="暂停" class="mr-[19px]"><svg class="h-[22px] w-5" viewBox="0 0 20 22"><path d="M1.500 0v22M18 0v22" stroke="#888" stroke-width="2.500"/></svg></button>
  <button aria-label="停止" class="mr-4 size-[22px] bg-[#e31818]"></button>
  <button aria-label="画笔"><svg class="h-6 w-6" viewBox="0 0 24 24"><path d="M19 1l4 4L9 20l-5-5zM3 16l5 5-6 2z" fill="#777"/></svg></button>
  <svg class="absolute top-3.5 left-8 h-[26px] w-[18px]" viewBox="0 0 18 26"><path d="M1 1v19l4-4 4 8 4-2-4-8h7z" fill="#fff" stroke="#777"/></svg>
</div>

<!-- 视频标题字 -->
<svg class="pointer-events-none absolute top-[460px] left-[560px] h-[180px] w-[640px] overflow-visible" viewBox="0 0 640 180">
  <g class="[filter:drop-shadow(2px_2px_0_#fff)_drop-shadow(5px_5px_0_#2656bd)_drop-shadow(5px_5px_0_#2656bd)_drop-shadow(4px_4px_0_#2656bd)]">
    <text x="16" y="134" class="fill-white stroke-[#2656bd] stroke-[20px] font-['Inter'] text-[147px] font-bold [paint-order:stroke] [stroke-linejoin:round]">P7IF.IFS</text>
  </g>
</svg>

<script>
const widths = [55, 133, 133, 133, 133, 133, 133, 170, 133, 40, 160, 133, 133, 133];
document.getElementById('cols').innerHTML = widths.map(w => `<col style="width:${w}px">`).join('');

const letters = 'ABCDEFGHIJKLM';
document.getElementById('head').innerHTML =
  `<th class="h-[37px] border-r border-b border-[#b5b5b5] bg-[#e6e6e6] p-0"><svg class="ml-auto mr-0.5 h-[31px] w-8" viewBox="0 0 32 31"><path d="M32 0v31H0z" fill="#1e6b45"/></svg></th>` +
  [...letters].map(c => c === 'H'
    ? `<th scope="col" class="h-[37px] border-r border-b-2 border-r-[#bbb] border-b-[#1e6b45] bg-[#d2d2d2] p-0 pt-px font-light text-[#1e5c40]">${c}</th>`
    : `<th scope="col" class="h-[37px] border-r border-b border-r-[#cfcfcf] border-b-[#aaa] bg-[#e6e6e6] p-0 pt-0.5 font-light">${c}</th>`).join('');

const pupils = [
  ['张敏婷', 92, 76, 67, 235, '优秀'], ['钱耀文', 73, 100, 99, 272, '良'], ['施萍', 98, 87, 93, 278, '优秀'],
  ['钱火英', 79, 61, 98, 238, '良'], ['姜雪倩', 92, 99, 99, 290, '优秀'], ['韩乐', 60, 69, 72, 201, '良'],
  ['魏馨语', 72, 71, 69, 212, '良'], ['卫醉薇', 91, 76, 90, 257, '优秀'], ['王秀丽', 75, 67, 61, 203, '良'],
  ['冯佳', 96, 100, 72, 268, '优秀'], ['冯艳', 88, 86, 89, 263, '良'], ['魏小兰', 75, 93, 84, 252, '良'],
];
const cells = {
  G1: 'power query', H1: 'power bi', C2: '语文', D2: '数学', E2: '英语', F2: '总分', H3: '#N/A',
  J4: '如果我是好人，我今天就捡到10块钱，不是', J5: '我是好人', K5: '+10', J6: '我不是好人', K6: '-10', M6: 'iferror',
  J7: '我是坏人', K7: '-10', J8: '#N/A', K8: '乱码', J9: 'Iferror', K9: '乱码', K10: 'Iferror',
};
pupils.forEach((p, i) => p.forEach((v, j) => { cells['BCDEFG'[j] + (i + 3)] = v; }));
const centred = ['G1', 'H1', 'H3', 'J8'], right = ['K6', 'K7'];

let html = '';
for (let r = 1; r <= 18; r++) {
  html += r === 3
    ? `<tr><th scope="row" class="h-[37px] border-r-2 border-b border-r-[#1e6b45] border-b-[#c4c4c4] bg-[#d2d2d2] p-0 font-light text-[#1e6b45]">3</th>`
    : `<tr><th scope="row" class="${r % 2 ? 'h-[37px]' : 'h-9'} border-r border-b border-[#c4c4c4] bg-[#e6e6e6] p-0 font-light">${r}</th>`;
  for (const c of letters) {
    if (r === 4 && (c === 'K' || c === 'L' || c === 'M')) continue;
    const key = c + r, v = cells[key] ?? '';
    const table = 'BCDEF'.includes(c);
    const bottom = table && (r === 1 || r === 2 || r === 14) ? 'border-b-black' : 'border-b-[#e0e0e0]';
    const side = (r >= 2 && r <= 14 && (c === 'A' || c === 'B' || c === 'F')) ? 'border-r-black' : 'border-r-[#e0e0e0]';
    const align = centred.includes(key) ? 'text-center' : (typeof v === 'number' || right.includes(key)) ? 'text-right' : 'text-left';
    const size = /[\u4e00-\u9fff]/.test(v) ? 'text-[29px]' : 'text-[28px]';
    html += `<td${key === 'J4' ? ' colspan="4"' : ''} class="border-r border-b p-0 px-1 ${size} ${bottom} ${side} ${align}">${v}</td>`;
  }
  html += '</tr>';
}
document.getElementById('rows').innerHTML = html;
</script>
</body>
</html>
